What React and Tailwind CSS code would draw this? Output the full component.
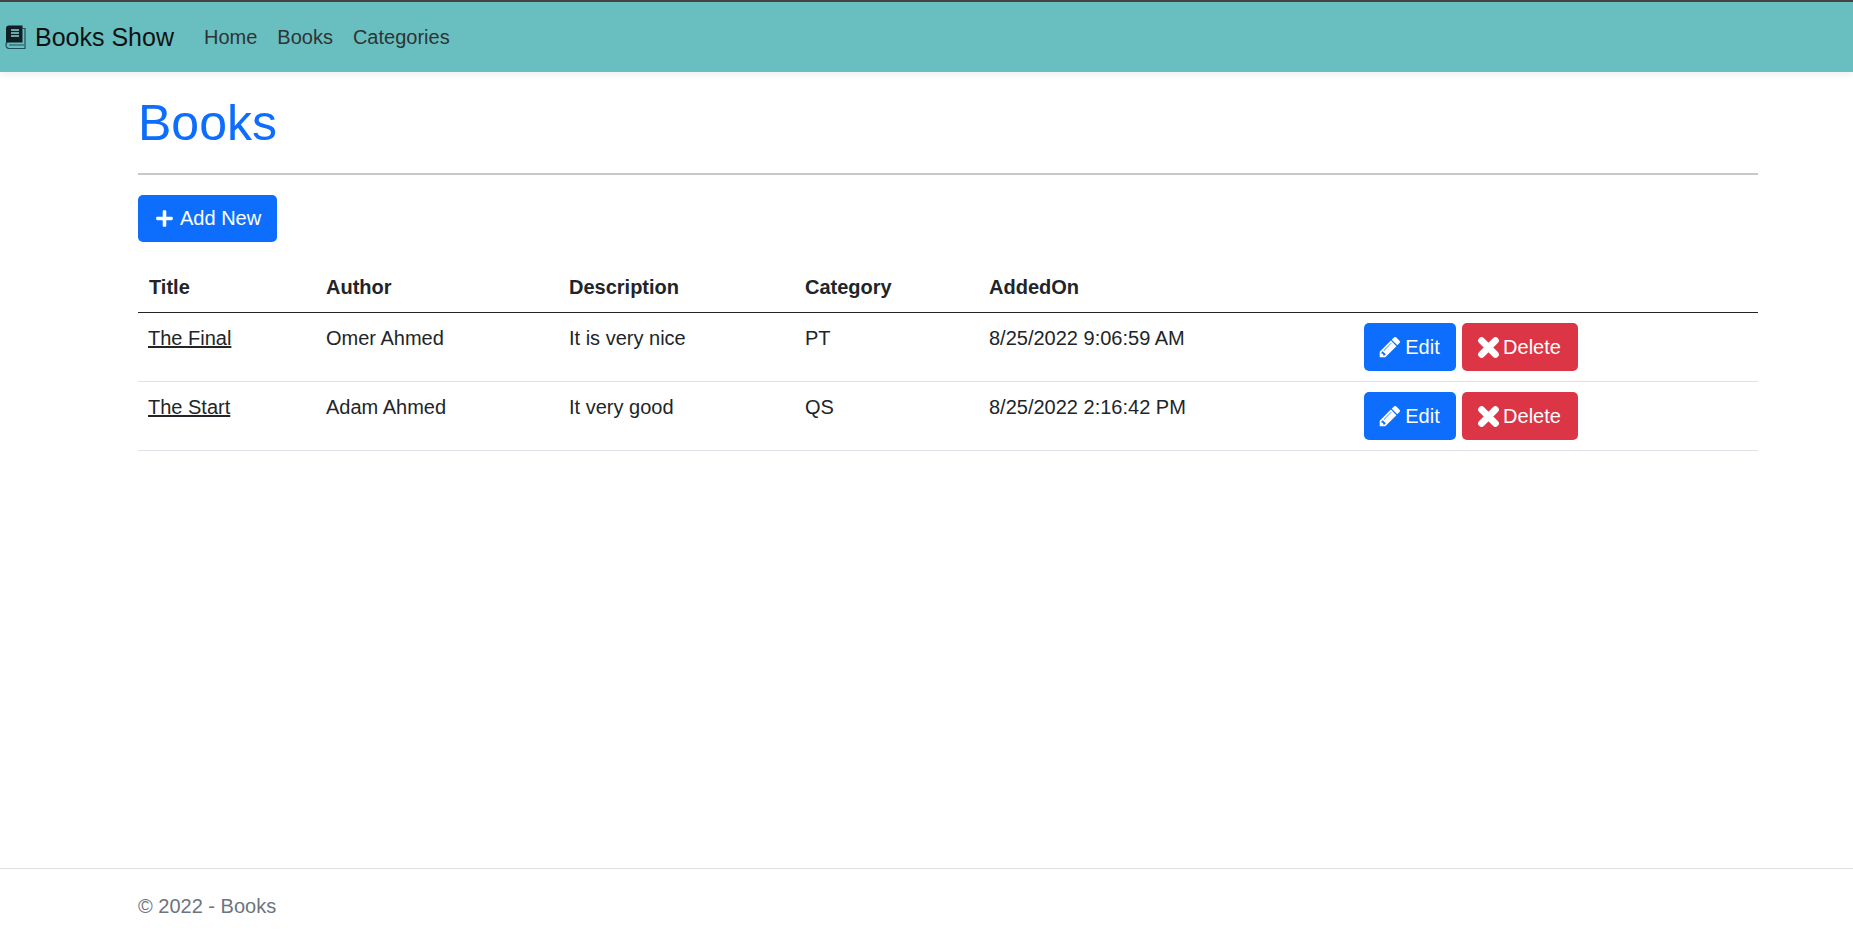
import React from "react";
import { FaPlus } from "react-icons/fa";

const books = [
  { title: "The Final", author: "Omer Ahmed", description: "It is very nice", category: "PT", addedOn: "8/25/2022 9:06:59 AM" },
  { title: "The Start", author: "Adam Ahmed", description: "It very good", category: "QS", addedOn: "8/25/2022 2:16:42 PM" },
];

function BookIcon() {
  return (
    <svg viewBox="0 0 21 24" className="w-[21px] h-[24px] mr-[9px]">
      <path d="M1 3.5C1 1.5 2 .5 4 .5h13.5v17H4C2 17.5 1 18.5 1 19.5z" fill="#0f1f26" />
      <path d="M17.5 3.5h2.5v20H4C2 23.5 1 22 1 19.5c0-1.600 1-2.500 3-2.500" fill="none" stroke="#1f4f5c" strokeWidth="1.200" />
      <path d="M4 20h15" stroke="#1f4f5c" strokeWidth="1" />
      <path d="M6 5h8M6 8h8M6 11h8" stroke="#8fd3d4" strokeWidth="1.300" />
    </svg>
  );
}

function PencilIcon() {
  return (
    <svg viewBox="0 0 1792 1792" className="w-[24px] h-[24px] mr-[3px]" fill="currentColor" fillRule="evenodd">
      <path d="M491 1536l91-91-235-235-91 91v107h128v128h107zm523-928q0-22-22-22-10 0-17 7l-542 542q-7 7-7 17 0 22 22 22 10 0 17-7l542-542q7-7 7-17zm-54-192l416 416-832 832h-416v-416zm683 96q0 53-37 90l-166 166-416-416 166-165q36-38 90-38 53 0 91 38l235 234q37 39 37 91z" />
    </svg>
  );
}

function CrossIcon() {
  return (
    <svg viewBox="0 0 20 20" className="w-[23px] h-[23px] mr-[3px]" fill="none" stroke="currentColor" strokeWidth="6" strokeLinecap="round">
      <path d="M4 4l12 12M16 4L4 16" />
    </svg>
  );
}

function App() {
  return (
    <div className="min-h-[932px] flex flex-col bg-white text-[20px] leading-[30px] text-[#212529] font-['Liberation_Sans',Arial,sans-serif]">
      <nav className="h-[72px] flex items-center border-t-2 border-[#444] bg-[#69bfc0] shadow-[0_2px_8px_rgba(0,0,0,0.08)]">
        <a href="#" className="flex items-center text-[25px] text-[#111] ml-[5px]">
          <BookIcon />
          Books Show
        </a>
        <ul className="flex ml-[20px] text-[#2d3436]">
          <li className="px-[10px]"><a href="#">Home</a></li>
          <li className="px-[10px]"><a href="#">Books</a></li>
          <li className="px-[10px]"><a href="#">Categories</a></li>
        </ul>
      </nav>

      <main className="flex-1 ml-[138px] w-[1620px]">
        <h1 className="text-[50px] leading-[60px] text-[#0d6efd] mt-[21px]">Books</h1>
        <hr className="mt-[20px] border-t-2 border-[#c8c8c8]" />
        <button className="mt-[20px] h-[47px] w-[139px] pl-[17px] pb-[1px] flex items-center bg-[#0d6efd] text-white rounded-[5px]">
          <FaPlus className="text-[19px] mr-[6px]" />
          Add New
        </button>

        <table className="w-full mt-[20px] border-separate border-spacing-0">
          <thead>
            <tr className="text-left">
              <th className="w-[178px] py-[10px] pl-[11px] pr-[10px] border-b border-[#212529]">Title</th>
              <th className="w-[243px] p-[10px] border-b border-[#212529]">Author</th>
              <th className="w-[236px] p-[10px] border-b border-[#212529]">Description</th>
              <th className="w-[184px] p-[10px] border-b border-[#212529]">Category</th>
              <th className="w-[375px] p-[10px] border-b border-[#212529]">AddedOn</th>
              <th className="p-[10px] border-b border-[#212529]"></th>
            </tr>
          </thead>
          <tbody>
            {books.map((book) => (
              <tr key={book.title} className="align-top">
                <td className="p-[10px] border-b border-[#dee2e6]"><a href="#" className="underline">{book.title}</a></td>
                <td className="p-[10px] border-b border-[#dee2e6]">{book.author}</td>
                <td className="p-[10px] border-b border-[#dee2e6]">{book.description}</td>
                <td className="p-[10px] border-b border-[#dee2e6]">{book.category}</td>
                <td className="p-[10px] border-b border-[#dee2e6]">{book.addedOn}</td>
                <td className="p-[10px] border-b border-[#dee2e6]">
                  <div className="flex gap-[6px]">
                    <button className="h-[48px] w-[92px] pr-[2px] flex items-center justify-center bg-[#0d6efd] text-white rounded-[5px]">
                      <PencilIcon />
                      Edit
                    </button>
                    <button className="h-[48px] w-[116px] pr-[2px] flex items-center justify-center bg-[#dc3545] text-white rounded-[5px]">
                      <CrossIcon />
                      Delete
                    </button>
                  </div>
                </td>
              </tr>
            ))}
          </tbody>
        </table>
      </main>

      <footer className="h-[64px] pt-[10px] border-t border-[#dee2e6] text-[#6c757d] flex items-center pl-[138px]">
        © 2022 - Books
      </footer>
    </div>
  );
}

export default App;
